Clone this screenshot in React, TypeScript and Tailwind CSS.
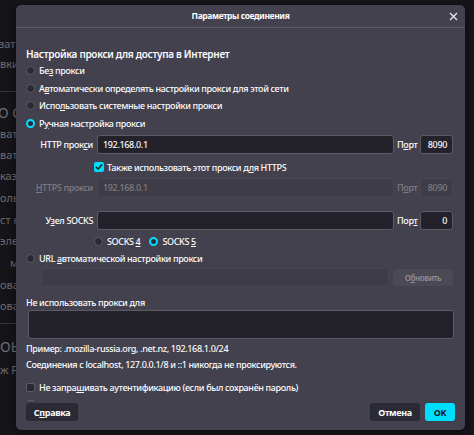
import React from 'react';

const Radio = ({ checked = false }: { checked?: boolean }) =>
	checked ? (
		<span className="block w-[9px] h-[9px] rounded-full border-[2.5px] border-[#00ddff] bg-[#2b2a33] shrink-0" />
	) : (
		<span className="block w-[9px] h-[9px] rounded-full border border-[#5b5b66] bg-[#2b2a33] shrink-0" />
	);

const Checkbox = ({ checked = false }: { checked?: boolean }) =>
	checked ? (
		<span className="w-[10px] h-[10px] rounded-[2px] bg-[#00ddff] flex items-center justify-center shrink-0">
			<svg width="8" height="8" viewBox="0 0 8 8" fill="none">
				<path d="M1.2 4.2 3.2 6 6.8 1.8" stroke="#1c1b22" strokeWidth="1.4" strokeLinecap="round" strokeLinejoin="round" />
			</svg>
		</span>
	) : (
		<span className="block w-[9px] h-[9px] rounded-[2px] border border-[#5b5b66] bg-[#2b2a33] shrink-0" />
	);

const Input = ({ value = '', disabled = false, right = false, className = '' }: { value?: string; disabled?: boolean; right?: boolean; className?: string }) => (
	<div
		className={`h-[19px] rounded-[3px] border flex items-center px-[5px] ${
			disabled ? 'border-[#47464f] bg-[#3d3c47] text-[#7e7d86]' : 'border-[#5b5b66] bg-[#23222b] text-[#fbfbfe]'
		} ${right ? 'justify-end' : ''} ${className}`}
	>
		{value}
	</div>
);

const App = () => {
	return (
		<div
			className="relative w-[474px] h-[435px] bg-[#151419] overflow-hidden text-[9px] font-medium tracking-[-0.35px] leading-none"
			style={{ fontFamily: '"Noto Sans", "Open Sans", sans-serif' }}
		>
			{/* page behind the dialog */}
			<div className="flex flex-col text-[#6e6d75] text-[11px] font-normal tracking-normal">
				<div className="h-[38px]" />
				<div className="h-[20px] -ml-[1px]">зать</div>
				<div className="h-[33px]">вки р</div>
				<div className="h-px bg-[#38373f] w-[20px]" />
				<div className="h-[14px]" />
				<div className="h-[22px] text-[14px] -ml-[2px]">О С</div>
				<div className="h-[21px]">вать</div>
				<div className="h-[21px]">вать</div>
				<div className="h-[22px]">казь</div>
				<div className="h-[22px]">ольз</div>
				<div className="h-[21px]">ст н</div>
				<div className="h-[22px]">эле</div>
				<div className="h-[22px] pl-[10px]">ме,</div>
				<div className="h-[21px]">оват</div>
				<div className="h-[23px]">оват</div>
				<div className="h-px bg-[#38373f] w-[20px]" />
				<div className="h-[16px]" />
				<div className="h-[24px] text-[14px]">ОЫ</div>
				<div className="h-[20px]">ж Fi</div>
			</div>

			{/* dialog */}
			<div className="absolute left-[16px] top-[5px] w-[449px] h-[425px] rounded-[5px] bg-[#42414d] flex flex-col text-[#fbfbfe] shadow-[0_2px_10px_rgba(0,0,0,0.5)]">
				<div className="relative h-[23px] shrink-0 border-b border-[#5a5963] flex items-center justify-center">
					<span className="font-bold text-[8.5px] tracking-[-0.4px]">Параметры соединения</span>
					<svg className="absolute right-[7px] top-[7px]" width="9" height="9" viewBox="0 0 9 9">
						<path d="M1 1 8 8M8 1 1 8" stroke="#e8e8ee" strokeWidth="1.3" />
					</svg>
				</div>

				<div className="flex-1 min-h-0 overflow-hidden pl-[10px] pr-[12px] pt-[17px]">
					<div className="h-[17px] flex items-center font-semibold text-[10px] tracking-[-0.3px]">
						Настройка прокси для доступа в Интернет
					</div>
					<div className="h-[17.5px] flex items-center gap-[4px]">
						<Radio />
						<span>
							Бе<u>з</u> прокси
						</span>
					</div>
					<div className="h-[17.5px] flex items-center gap-[4px]">
						<Radio />
						<span>
							А<u>в</u>томатически определять настройки прокси для этой сети
						</span>
					</div>
					<div className="h-[17.5px] flex items-center gap-[4px]">
						<Radio />
						<span>
							Испо<u>л</u>ьзовать системные настройки прокси
						</span>
					</div>
					<div className="h-[17.5px] flex items-center gap-[4px]">
						<Radio checked />
						<span>
							Р<u>у</u>чная настройка прокси
						</span>
					</div>

					<div className="mt-[3px] flex items-center">
						<span className="w-[67px] text-right whitespace-nowrap">
							HTTP прок<u>с</u>и
						</span>
						<Input value="192.168.0.1" className="ml-[4px] flex-1" />
						<span className="w-[19px] ml-[3px]">
							П<u>о</u>рт
						</span>
						<Input value="8090" right className="ml-[4px] w-[33px]" />
					</div>
					<div className="mt-[4px] h-[18px] flex items-center gap-[3px] ml-[68px]">
						<Checkbox checked />
						<span>
							Также использовать этот прокси д<u>л</u>я HTTPS
						</span>
					</div>
					<div className="mt-[2px] flex items-center text-[#7e7d86]">
						<span className="w-[67px] text-right whitespace-nowrap">
							<u>H</u>TTPS прокси
						</span>
						<Input value="192.168.0.1" disabled className="ml-[4px] flex-1" />
						<span className="w-[19px] ml-[3px]">
							П<u>о</u>рт
						</span>
						<Input value="8090" disabled right className="ml-[4px] w-[33px]" />
					</div>
					<div className="mt-[14px] flex items-center">
						<span className="w-[67px] text-right whitespace-nowrap">
							У<u>з</u>ел SOCKS
						</span>
						<Input className="ml-[4px] flex-1" />
						<span className="w-[19px] ml-[3px]">
							Пор<u>т</u>
						</span>
						<Input value="0" right className="ml-[4px] w-[33px]" />
					</div>
					<div className="mt-[2px] h-[18px] flex items-center ml-[68px]">
						<Radio />
						<span className="ml-[4px]">
							SOCKS <u>4</u>
						</span>
						<span className="ml-[9px]">
							<Radio checked />
						</span>
						<span className="ml-[4px]">
							SOCKS <u>5</u>
						</span>
					</div>
					<div className="h-[16px] flex items-center gap-[4px]">
						<Radio />
						<span>
							URL <u>а</u>втоматической настройки прокси
						</span>
					</div>
					<div className="mt-[2px] flex items-center ml-[15px]">
						<Input disabled className="flex-1" />
						<div className="ml-[4px] w-[60px] h-[17px] rounded-[3px] bg-[#4a4954] text-[#8f8e96] font-semibold text-[8px] flex items-center justify-center">
							О<u>б</u>новить
						</div>
					</div>
					<div className="mt-[8px] h-[15px] flex items-center">Не использовать прокси для</div>
					<div className="ml-[2px] -mr-[1px] h-[29px] rounded-[3px] border border-[#5b5b66] bg-[#23222b]" />
					<div className="mt-[1px] h-[16px] flex items-center">Пример: .mozilla-russia.org, .net.nz, 192.168.1.0/24</div>
					<div className="h-[17px] flex items-center">
						Соединения с localhost, 127.0.0.1/8 и ::1 никогда не проксируются.
					</div>
					<div className="mt-[5px] h-[18px] flex items-center gap-[4px]">
						<Checkbox />
						<span>
							Не запра<u>ш</u>ивать аутентификацию (если был сохранён пароль)
						</span>
					</div>
					{/* next option, scrolled under the footer */}
					<div className="h-[16px] flex items-center">
						<Checkbox />
					</div>
				</div>

				<div className="shrink-0 h-[29px] pt-[2px] px-[10px] flex items-start">
					<div className="w-[52px] h-[18px] rounded-[3px] bg-[#2b2a33] font-bold text-[9px] flex items-center justify-center">
						С<u>п</u>равка
					</div>
					<div className="ml-auto w-[50px] h-[18px] rounded-[3px] bg-[#2b2a33] font-bold text-[9px] flex items-center justify-center">
						Отмена
					</div>
					<div className="ml-[5px] w-[30px] h-[18px] rounded-[3px] bg-[#00ddff] text-[#15141a] font-bold text-[9px] flex items-center justify-center">
						OK
					</div>
				</div>
			</div>
		</div>
	);
};

export default App;
